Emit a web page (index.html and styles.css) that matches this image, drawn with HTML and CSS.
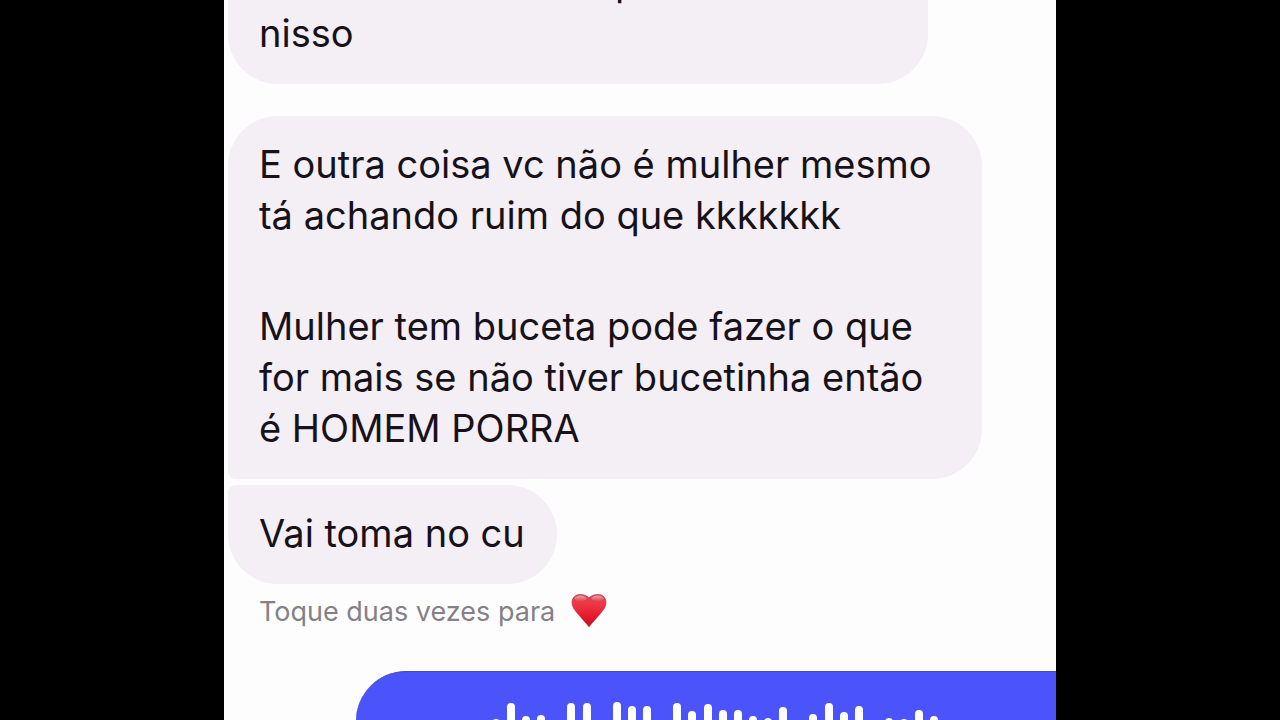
FILE: index.html
```html
<!doctype html>
<html lang="pt-BR">
  <head>
    <meta charset="utf-8">
    <meta name="viewport" content="width=device-width, initial-scale=1">
    <title>Chat</title>

    <link rel="stylesheet" href="styles.css">
  </head>
  <body>
    <main class="chat">
      <div class="bubble bubble-first">
        <p class="cut-line">p</p>
        <p>nisso</p>
      </div>

      <div class="bubble bubble-long">
        <p>E outra coisa vc não é mulher mesmo<br>tá achando ruim do que kkkkkkk</p>
        <p>Mulher tem buceta pode fazer o que<br>for mais se não tiver bucetinha então<br>é HOMEM PORRA</p>
      </div>

      <div class="bubble bubble-last">
        <p>Vai toma no cu</p>
      </div>

      <div class="hint">
        <span>Toque duas vezes para</span>
        <svg class="heart" viewBox="0 0 36 36" role="img" aria-label="coração">
          <defs>
            <linearGradient id="red" x1="0" y1="0" x2="0" y2="1">
              <stop offset="0" stop-color="#c9485a"/>
              <stop offset="0.25" stop-color="#ee3a48"/>
              <stop offset="0.7" stop-color="#e5182a"/>
              <stop offset="1" stop-color="#b80f20"/>
            </linearGradient>
            <linearGradient id="shine" x1="0" y1="0" x2="0" y2="1">
              <stop offset="0" stop-color="#fff" stop-opacity="0.5"/>
              <stop offset="1" stop-color="#fff" stop-opacity="0"/>
            </linearGradient>
          </defs>
          <path fill="url(#red)" stroke="#b8283a" stroke-width="0.6" d="M18 34C16 31 12 27 7 21C3 16.500 1 13.500 1 9.500C1 4.500 4.500 1.500 9 1.500C13 1.500 16.500 3 18 5C19.500 3 23 1.500 27 1.500C31.500 1.500 35 4.500 35 9.500C35 13.500 33 16.500 29 21C24 27 20 31 18 34Z"/>
          <ellipse fill="url(#shine)" cx="9.500" cy="5.500" rx="6" ry="3"/>
          <ellipse fill="url(#shine)" cx="26.500" cy="5.500" rx="6" ry="3"/>
        </svg>
      </div>

      <div class="voice">
        <svg class="wave" viewBox="0 0 450 60" aria-hidden="true">
          <g stroke="#fff" stroke-width="8" stroke-linecap="round">
            <path d="M6 22V50M21 6V60M36 19V50M51 18V50M66 30V50"/>
            <path d="M81 6V60M97 6V60M112 30V50M127 5V60M142 9V60M157 9V60"/>
            <path d="M172 30V50M187 6V60M202 14V50M218 7V60M233 13V50M248 13V50"/>
            <path d="M263 19V50M278 21V50M293 10V50M308 30V50M323 17V50"/>
            <path d="M339 6V60M354 15V50M369 9V60M384 30V50M399 21V50"/>
            <path d="M414 22V50M429 13V50M444 19V50"/>
          </g>
        </svg>
      </div>
    </main>
  </body>
</html>
```
FILE: styles.css
```css
* { box-sizing: border-box; }

body {
  margin: 0;
  height: 100vh;
  overflow: hidden;
  background: #000;
  color: #17121a;
  font-family: Inter, Roboto, sans-serif;
  font-size: 38px;
  line-height: 51px;
}

p { margin: 0; }

.chat {
  display: flex;
  flex-direction: column;
  align-items: flex-start;
  width: 65%;
  height: 100%;
  margin: 0 auto;
  padding-left: 4px;
  overflow: hidden;
  background: #fefdfe;
}

.bubble {
  flex: none;
  padding: 23px 32px 25px 31px;
  border-radius: 50px;
  background: #f4eef5;
}

/* scrolled partly out of view */
.bubble-first {
  width: 700px;
  max-width: 90%;
  margin-top: -66px;
  margin-bottom: 32px;
}

.cut-line { padding-left: 356px; }

.bubble-long {
  padding-right: 50px;
  margin-bottom: 6px;
  border-bottom-left-radius: 8px;
}

.bubble-long p + p { margin-top: 60px; }

.bubble-last { border-top-left-radius: 8px; }

.hint {
  display: flex;
  align-items: center;
  gap: 16px;
  flex: none;
  height: 54px;
  padding-left: 31px;
  color: #858086;
  font-size: 27px;
}

.heart {
  width: 36px;
  height: 36px;
}

.voice {
  flex: none;
  align-self: stretch;
  margin-top: 33px;
  margin-left: 128px;
  padding: 29px 0 29px 134px;
  border-top: 1px solid #4a4bb0;
  border-radius: 50px 0 0 50px;
  background: #4a54fa;
}

.wave {
  display: block;
  width: 450px;
  height: 60px;
}
```
